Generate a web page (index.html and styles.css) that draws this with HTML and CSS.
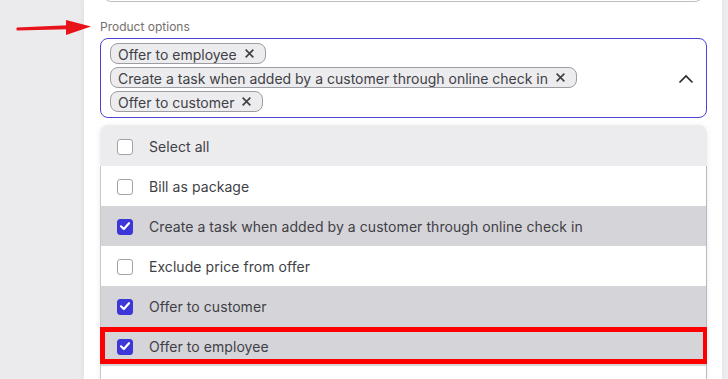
FILE: index.html
```html
<!DOCTYPE html>
<html>
<head>
<meta charset="utf-8">
<link rel="stylesheet" href="styles.css">
</head>
<body>
<div class="page">
  <aside class="side"></aside>
  <main class="card">
    <div class="prev-input"></div>
    <div class="label">Product options</div>
    <div class="select">
      <div class="chips">
        <span class="chip">Offer to employee <svg class="x" viewBox="0 0 10 10"><path d="M1.5 1.5L8.5 8.5M8.5 1.5L1.5 8.5"/></svg></span>
        <span class="chip">Create a task when added by a customer through online check in <svg class="x" viewBox="0 0 10 10"><path d="M1.5 1.5L8.5 8.5M8.5 1.5L1.5 8.5"/></svg></span>
        <span class="chip">Offer to customer <svg class="x" viewBox="0 0 10 10"><path d="M1.5 1.5L8.5 8.5M8.5 1.5L1.5 8.5"/></svg></span>
      </div>
      <svg class="chev" viewBox="0 0 16 10"><path d="M1.5 8.5L8 2L14.5 8.5"/></svg>
    </div>
    <div class="dropdown">
      <div class="row row-all"><span class="cb"></span>Select all</div>
      <div class="list">
        <div class="row"><span class="cb"></span>Bill as package</div>
        <div class="row row-on"><span class="cb on"><svg viewBox="0 0 16 16"><path d="M4 8.3L6.8 11L12 5.2"/></svg></span>Create a task when added by a customer through online check in</div>
        <div class="row"><span class="cb"></span>Exclude price from offer</div>
        <div class="row row-on"><span class="cb on"><svg viewBox="0 0 16 16"><path d="M4 8.3L6.8 11L12 5.2"/></svg></span>Offer to customer</div>
        <div class="row row-on highlight"><span class="cb on"><svg viewBox="0 0 16 16"><path d="M4 8.3L6.8 11L12 5.2"/></svg></span>Offer to employee</div>
        <div class="row"></div>
      </div>
    </div>
  </main>
  <div class="rightbar"></div>
</div>
<svg class="annot-arrow" viewBox="0 0 90 26" width="90" height="26"><path d="M7 13.4Q5.5 15 7 16.6L58 15.2L58 11.2Z" fill="#e8121a"/><path d="M56 6L81 12.6L56 21Z" fill="#e8121a"/></svg>
</body>
</html>
```

FILE: styles.css
```css
html, body {
  margin: 0;
  padding: 0;
  width: 728px;
  height: 379px;
  overflow: hidden;
  font-family: Inter, "Noto Sans", sans-serif;
  background: #ebebed;
}
.page {
  display: flex;
  height: 379px;
  overflow: hidden;
  position: relative;
}
.side {
  width: 84px;
  flex: none;
  background: #ebebed;
}
.card {
  width: 638px;
  box-sizing: border-box;
  flex: none;
  background: #fff;
  padding: 0 15px 0 16px;
  box-shadow: 0 0 6px rgba(0,0,0,0.07);
  position: relative;
  z-index: 1;
}
.rightbar {
  flex: 1;
  background: #eeeef0;
}
.prev-input {
  margin: -30px 4px 0 3px;
  height: 30px;
  border: 1px solid #bdbdc2;
  border-radius: 8px;
}
.label {
  margin-top: 17px;
  font-size: 12px;
  line-height: 16px;
  color: #75706c;
}
.select {
  margin-top: 3px;
  height: 80px;
  box-sizing: border-box;
  border: 1px solid #4b44d6;
  border-radius: 8px;
  display: flex;
  padding: 4px 12px 0 9px;
  align-items: flex-start;
}
.chips {
  flex: 1;
  display: flex;
  flex-direction: column;
  align-items: flex-start;
  gap: 3px;
}
.chip {
  display: inline-flex;
  align-items: center;
  height: 21px;
  box-sizing: border-box;
  padding: 2px 10px 0 7px;
  border: 1px solid #9c9ca3;
  background: #ececee;
  border-radius: 8px;
  font-size: 14px;
  color: #3f3f46;
  white-space: nowrap;
}
.x {
  width: 11px;
  height: 11px;
  margin-left: 7px;
  margin-top: -2px;
  fill: none;
  stroke: #3f3f46;
  stroke-width: 1.5;
}
.chev {
  width: 16px;
  height: 10px;
  margin-top: 31px;
  fill: none;
  stroke: #27272a;
  stroke-width: 1.6;
}
.dropdown {
  margin-top: 7px;
  border-radius: 8px 8px 0 0;
  overflow: hidden;
  box-shadow: 0 1px 6px rgba(0,0,0,0.08);
  background: #fff;
}
.list {
  border-right: 1px solid #b8b8be;
  border-left: 1px solid #c6c6cb;
}
.row {
  height: 40px;
  box-sizing: border-box;
  display: flex;
  align-items: center;
  padding-left: 17px;
  padding-top: 1px;
  gap: 16px;
  font-size: 14px;
  letter-spacing: 0.06px;
  color: #3f3f46;
  white-space: nowrap;
  position: relative;
}
.row-all {
  height: 41px;
  padding-top: 2px;
  background: #ececee;
}
.list .row { padding-left: 16px; }
.row-on { background: #d5d4d9; }
.cb {
  width: 16px;
  height: 16px;
  box-sizing: border-box;
  border: 1.5px solid #a1a1a9;
  border-radius: 3px;
  background: #fff;
  flex: none;
  display: flex;
}
.cb.on {
  background: #3d36d8;
  border-color: #3d36d8;
}
.cb svg {
  width: 16px;
  height: 16px;
  margin: -1.5px;
  fill: none;
  stroke: #fff;
  stroke-width: 2.2;
  stroke-linecap: round;
  stroke-linejoin: round;
}
.highlight::after {
  content: "";
  position: absolute;
  left: -1px;
  right: -2px;
  top: 1px;
  bottom: 2px;
  border: 5px solid #ff0000;
}
.annot-arrow {
  position: absolute;
  left: 10px;
  top: 14px;
  z-index: 2;
}
```
